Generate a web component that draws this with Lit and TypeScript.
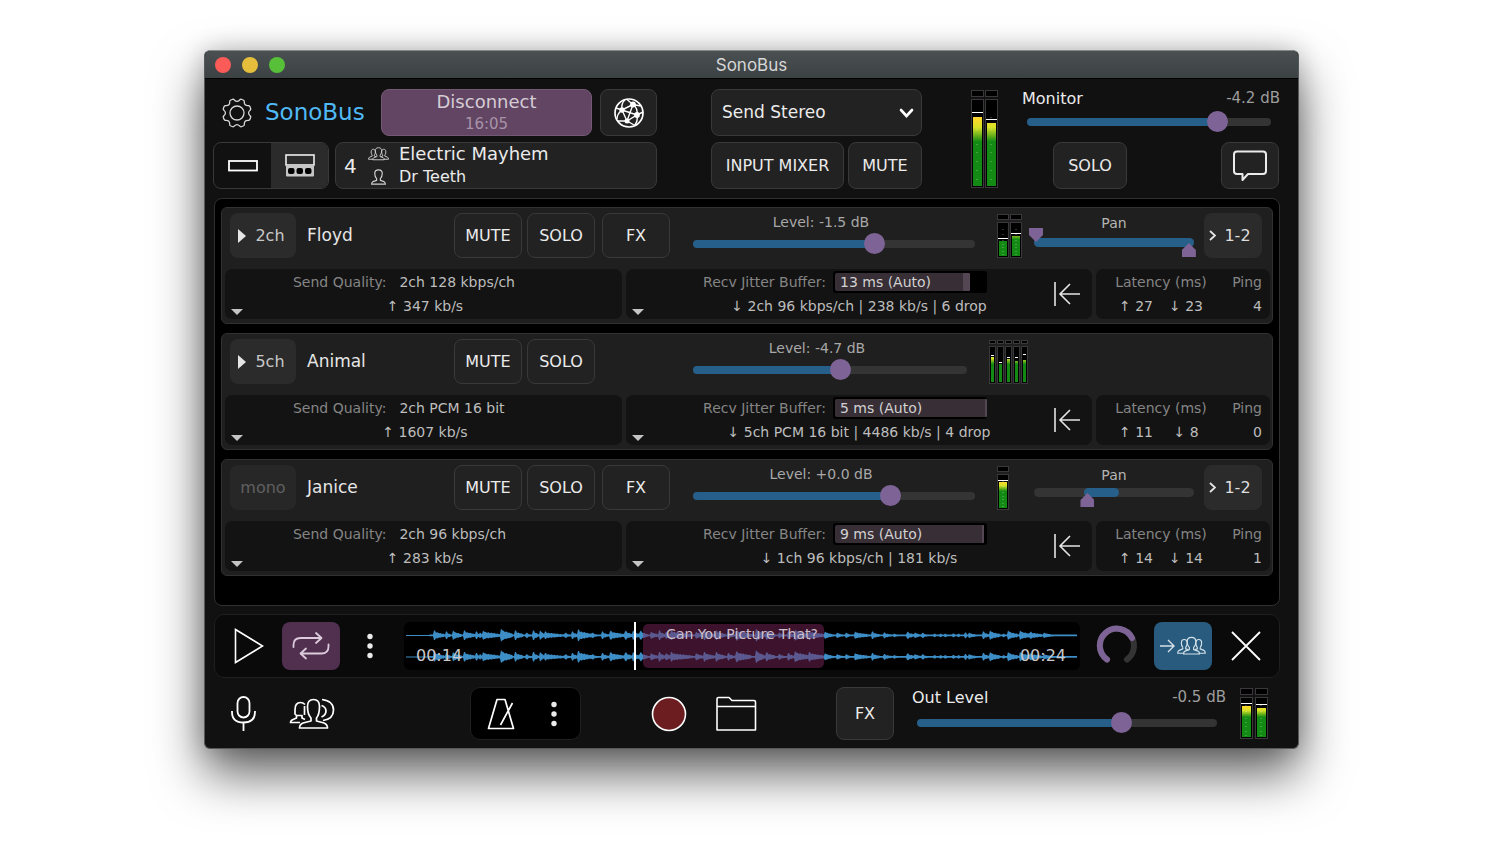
import { LitElement, html, css, svg, nothing } from "lit";
import { customElement, property } from "lit/decorators.js";

type Channel = { level: number; peak: number };

interface Peer {
  name: string;
  channels: string;
  expandable: boolean;
  fx: boolean;
  level: string;
  levelPos: number;
  meters: Channel[];
  thin?: boolean;
  pan?: number[];
  sendQuality: string;
  sendRate: string;
  buffer: string;
  bufferPos: number;
  recv: string;
  up: number;
  down: number;
  ping: number;
}

const PEERS: Peer[] = [
  {
    name: "Floyd", channels: "2ch", expandable: true, fx: true,
    level: "-1.5 dB", levelPos: 65.7,
    meters: [{ level: 0.46, peak: 0.55 }, { level: 0.6, peak: 0.69 }],
    pan: [0, 98],
    sendQuality: "2ch 128 kbps/ch", sendRate: "347 kb/s",
    buffer: "13 ms (Auto)", bufferPos: 88,
    recv: "2ch 96 kbps/ch | 238 kb/s | 6 drop", up: 27, down: 23, ping: 4,
  },
  {
    name: "Animal", channels: "5ch", expandable: true, fx: false,
    level: "-4.7 dB", levelPos: 54, thin: true,
    meters: [
      { level: 0.71, peak: 0.76 }, { level: 0.51, peak: 0.57 }, { level: 0.66, peak: 0.72 },
      { level: 0.59, peak: 0.72 }, { level: 0.64, peak: 0.79 },
    ],
    sendQuality: "2ch PCM 16 bit", sendRate: "1607 kb/s",
    buffer: "5 ms (Auto)", bufferPos: 100,
    recv: "5ch PCM 16 bit | 4486 kb/s | 4 drop", up: 11, down: 8, ping: 0,
  },
  {
    name: "Janice", channels: "mono", expandable: false, fx: true,
    level: "+0.0 dB", levelPos: 71.7,
    meters: [{ level: 0.8, peak: 0.86 }],
    pan: [33],
    sendQuality: "2ch 96 kbps/ch", sendRate: "283 kb/s",
    buffer: "9 ms (Auto)", bufferPos: 98,
    recv: "1ch 96 kbps/ch | 181 kb/s", up: 14, down: 14, ping: 1,
  },
];

/* Bursts of the loaded track: start, peak height, length. */
const BURSTS: number[][] = [
  [28, 5, 11], [40, 4, 5], [47, 5, 9], [58, 5, 12], [70, 4, 4], [74, 3, 3], [77, 5, 18], [95, 7, 12],
  [109, 5, 9], [120, 3, 6], [127, 5, 6], [134, 5, 5], [139, 4, 20], [159, 3, 6], [166, 4, 7], [172, 6, 14],
  [186, 3, 6], [196, 4, 7], [204, 5, 15], [219, 5, 8], [227, 5, 7], [234, 5, 8], [245, 4, 8], [253, 5, 7],
  [260, 4, 6], [265, 5, 22], [290, 4, 8], [298, 5, 11], [310, 5, 10], [322, 4, 7], [330, 6, 16], [350, 7, 9],
  [360, 5, 10], [373, 3, 7], [382, 4, 7], [389, 6, 15], [403, 5, 16], [419, 4, 9], [431, 3, 7], [440, 3, 5],
  [449, 4, 15], [466, 4, 8], [478, 3, 9], [488, 2, 5], [501, 4, 8], [509, 3, 7], [516, 3, 6], [528, 2, 2],
  [534, 2, 3], [539, 2, 4], [547, 2, 3], [552, 2, 3], [559, 3, 3], [563, 3, 9], [577, 4, 7], [584, 5, 11],
  [597, 2, 4], [602, 5, 11], [614, 5, 12], [624, 4, 14], [638, 3, 10],
];

function envelope(x: number): number {
  let amp = 0;
  for (const [start, peak, length] of BURSTS) {
    if (x >= start && x < start + length) {
      const t = (x - start) / length;
      const fade = x - start < 2 ? 1 : 0.78 - t * 0.5;
      const ripple = x % 3 === 0 ? 0.78 : 1;
      amp = Math.max(amp, peak * fade * ripple);
    }
  }
  return amp;
}

function wavePath(middle: number): string {
  const top: string[] = [];
  const bottom: string[] = [];
  for (let x = 0; x <= 671; x++) {
    const half = Math.max(x < 24 ? 0.6 : 0.9, envelope(x));
    top.push(`${x + 2} ${(middle - half).toFixed(1)}`);
    bottom.unshift(`${x + 2} ${(middle + half * 0.9).toFixed(1)}`);
  }
  return `M${top.join("L")}L${bottom.join("L")}Z`;
}

function gearPath(): string {
  const teeth = 8;
  let d = "";
  const at = (deg: number, r: number) => {
    const rad = (deg * Math.PI) / 180;
    return `${(15 + Math.cos(rad) * r).toFixed(2)} ${(15 + Math.sin(rad) * r).toFixed(2)}`;
  };
  for (let i = 0; i < teeth; i++) {
    const c = i * 45 + 22.5;
    d += `${i ? "L" : "M"}${at(c - 11, 13.2)}Q${at(c - 9, 14.4)} ${at(c - 5, 14.4)}L${at(c + 5, 14.4)}Q${at(c + 9, 14.4)} ${at(c + 11, 13.2)}Q${at(c + 22.5, 10.2)} ${at(c + 34, 13.2)}`;
  }
  return d + "Z";
}

const PERSON = "M9 15C7 13 6 10 6 7C6 3 8 1 12 1S18 3 18 7C18 10 17 13 15 15V18L21 20Q23 21 23 24H1Q1 21 3 20L9 18Z";
const SIDE = "M7 15C6 14 5 12 5 9C5 5 7 4 9 4S13 5 13 9C13 12 12 14 11 15V17L14 18M7 15V17L2 19Q0 20 0 23H9";

const crowd = (w: number, h: number, stroke: number) => html`
  <svg width=${w} height=${h} viewBox="-1 0 40 26" fill="none" stroke="currentColor" stroke-width=${stroke} stroke-linejoin="round" aria-hidden="true">
    <g transform="translate(7 0)"><path d=${PERSON} /></g>
    <path d=${SIDE} />
    <g transform="translate(38 0) scale(-1 1)"><path d=${SIDE} /></g>
  </svg>`;

const dots = html`
  <svg width="8" height="26" viewBox="0 0 8 26" fill="currentColor" aria-hidden="true">
    <circle cx="4" cy="3.5" r="2.7" /><circle cx="4" cy="13" r="2.7" /><circle cx="4" cy="22.5" r="2.7" />
  </svg>`;

const shared = css`
  *, *::before, *::after { box-sizing: border-box; }
  button, select, input { font: inherit; color: inherit; margin: 0; }
  button {
    display: flex; align-items: center; justify-content: center;
    padding: 0; background: none; border: 0; cursor: pointer;
  }
  svg { display: block; flex: none; }
  .key {
    background: #222; border: 1px solid #393939; border-radius: 8px;
    font-size: 16px; color: #ebebeb;
  }
`;

@customElement("level-meter")
export class LevelMeter extends LitElement {
  @property({ attribute: false }) channels: Channel[] = [];
  @property({ type: Number }) bar = 12;
  @property({ type: Number }) gap = 1;
  @property({ type: Number }) tall = 44;
  @property({ type: Number }) clip = 6;

  static styles = css`
    :host { display: block; flex: none; }
    svg { display: block; }
  `;

  render() {
    const { bar, gap, tall, clip } = this;
    const width = this.channels.length * (bar + gap) - gap;
    const top = clip + 2;
    const body = tall - top;
    const inset = 2;
    const marks = [0.2, 0.34, 0.5, 0.6, 0.7, 0.8, 0.9];
    return html`
      <svg width=${width} height=${tall} viewBox="0 0 ${width} ${tall}" role="img" aria-label="Level meter" shape-rendering="crispEdges">
        <defs>
          <linearGradient id="scale" gradientUnits="userSpaceOnUse" x1="0" x2="0" y1=${top} y2=${tall}>
            <stop offset="0.1" stop-color="#ff8c1a" />
            <stop offset="0.22" stop-color="#ffd92b" />
            <stop offset="0.32" stop-color="#d6e226" />
            <stop offset="0.48" stop-color="#128a14" />
            <stop offset="1" stop-color="#128a14" />
          </linearGradient>
        </defs>
        ${this.channels.map((c, i) => {
          const x = i * (bar + gap);
          const h = Math.round((body - 3) * c.level);
          const p = Math.round(tall - 2 - (body - 3) * c.peak);
          const wide = bar > 8;
          return svg`
            <rect x=${x + 0.5} y="0.5" width=${bar - 1} height=${clip - 1} fill="#000" stroke="#3b383b" />
            <rect x=${x + 0.5} y=${top + 0.5} width=${bar - 1} height=${body - 1} fill="#000" stroke="#3b383b" />
            <rect x=${x + inset} y=${tall - 2 - h} width=${bar - inset * 2} height=${h} fill="url(#scale)" />
            <rect x=${x + inset - (wide ? 1 : 0)} y=${p} width=${bar - inset * 2 + (wide ? 2 : 0)} height="1" fill="#fff" />
            ${wide ? marks.map((m) => svg`<rect x=${x + Math.floor(bar / 2) - 1} y=${Math.round(top + body * m)} width="2" height="1" fill="#fff" fill-opacity="0.2" />`) : nothing}
          `;
        })}
      </svg>`;
  }
}

@customElement("level-slider")
export class LevelSlider extends LitElement {
  @property() label = "";
  @property({ type: Number }) value = 0;
  @property() text = "";

  static styles = [shared, css`
    :host { display: block; min-width: 0; }
    .range {
      display: block; width: 100%; height: 21px; appearance: none; outline-offset: 2px;
      background: none; cursor: pointer;
    }
    .range::-webkit-slider-runnable-track {
      height: 8px; border-radius: 4px;
      background: linear-gradient(#265f89, #265f89) left / calc(11px + (100% - 21px) * var(--pos) / 100) 100% no-repeat #343434;
    }
    .range::-webkit-slider-thumb {
      appearance: none; width: 21px; height: 21px; margin-top: -7px;
      border-radius: 50%; background: #7e6496; border: 0;
    }
  `];

  render() {
    return html`<input class="range" type="range" min="0" max="100" step="0.1" .value=${String(this.value)}
      aria-label=${this.label} aria-valuetext=${this.text} style="--pos:${this.value}" />`;
  }
}

@customElement("peer-row")
export class PeerRow extends LitElement {
  @property({ attribute: false }) peer!: Peer;

  static styles = [shared, css`
    :host {
      display: block; background: #1f1f1f; border: 1px solid #313131; border-radius: 6px;
      padding: 5px 2px 4px 3px; font-size: 14px; color: #bdbdbd;
    }
    .top {
      display: grid; padding: 0 8px 0 5px; height: 45px; margin-bottom: 11px;
      grid-template-columns: 66px minmax(0, 158fr) 216px minmax(0, 364fr) minmax(0, 160fr) 68px;
    }
    .chan { background: #2b2b2b; border-radius: 8px; gap: 9px; padding-right: 3px; font-size: 16px; color: #c8c8c8; }
    .chan.plain { background: #272727; color: #606060; padding-right: 0; }
    .name { font-size: 17px; color: #e6e6e6; padding-left: 11px; line-height: 44px; }
    .keys { display: grid; grid-template-columns: 68px 68px 68px; column-gap: 5px; }
    .keys .fx { margin: 0 -2px 0 2px; }
    .level { display: flex; gap: 22px; padding-left: 23px; }
    .fader { flex: 1; min-width: 0; }
    .caption { display: block; text-align: center; line-height: 18px; padding-right: 26px; margin-bottom: 2px; color: #a8a8a8; }
    .slot { width: 37px; padding-top: 1px; }
    .slot.wide { width: 45px; }
    .pan { display: flex; flex-direction: column; }
    .pan-caption { text-align: center; line-height: 20px; color: #b4b4b4; margin-bottom: 5px; }
    .pan-track {
      height: 9px; border-radius: 5px; display: grid; align-items: center;
      background: #343434; position: relative;
    }
    .pan-fill { grid-area: 1 / 1; height: 9px; border-radius: 5px; background: #265f89; }
    .pan.single .pan-caption { margin-bottom: 3px; }
    .pan.single .pan-fill { width: 22%; margin-left: 31%; }
    .pan-input {
      position: absolute; left: -5px; width: calc(100% + 10px); height: 14px;
      appearance: none; background: none; pointer-events: none;
    }
    .pan-input.upper { top: -10px; }
    .pan-input.lower { top: 5px; }
    .pan-input::-webkit-slider-thumb {
      appearance: none; width: 14px; height: 14px; background: #7e6496; pointer-events: auto;
      clip-path: polygon(0 0, 100% 0, 100% 50%, 50% 100%, 0 50%);
    }
    .pan-input.lower::-webkit-slider-thumb { clip-path: polygon(0 100%, 100% 100%, 100% 50%, 50% 0, 0 50%); }
    .out { background: #2b2b2b; border-radius: 8px; font-size: 16px; color: #dedede; gap: 8px; margin-left: 10px; padding-right: 6px; }

    .stats {
      display: grid; column-gap: 4px;
      grid-template-columns: minmax(0, 397fr) minmax(0, 466fr) minmax(0, 174fr);
    }
    .panel {
      display: grid; grid-template-rows: 24px 24px; align-content: center; align-items: center;
      height: 50px; border-radius: 7px; background: #131313; text-align: left; white-space: nowrap;
      color: #bdbdbd;
    }
    .label { color: #858585; }
    .whole { grid-column: 1 / -1; grid-row: 2; text-align: center; }
    .arrow { grid-column: 1; grid-row: 2; padding: 12px 0 0 6px; justify-self: start; }
    .send { grid-template-columns: 161fr 222fr; column-gap: 13px; }
    .send .label, .recv .label { text-align: right; }
    .send .whole { padding-left: 3px; }
    .recv { grid-template-columns: 200fr 154fr 98fr; column-gap: 7px; }
    .buffer { display: grid; align-items: center; }
    .buffer-range {
      grid-area: 1 / 1; appearance: none; width: 100%; height: 22px; padding: 2px 0 2px 2px; background: #000; border-radius: 3px;
      cursor: pointer;
    }
    .buffer-range::-webkit-slider-runnable-track {
      height: 18px; border-radius: 2px;
      background: linear-gradient(#382e36, #382e36) left / calc(var(--pos) * 1%) 100% no-repeat;
    }
    .buffer-range::-webkit-slider-thumb { appearance: none; width: var(--grip); height: 18px; background: #544653; border-radius: 1px; }
    .buffer-text { grid-area: 1 / 1; padding-left: 7px; pointer-events: none; color: #d2d2d2; }
    .reset { grid-column: 3; grid-row: 1 / 3; justify-self: end; margin-right: 11px; color: #e4e4e4; }
    .times { grid-template-columns: 50px 50px minmax(0, 1fr); padding: 0 8px 0 15px; text-align: center; }
    .times .lat { grid-column: 1 / 3; }
    .times .end { text-align: right; }
  `];

  render() {
    const p = this.peer;
    const caret = html`<svg width="12" height="6" viewBox="0 0 12 6" fill="#c4c4c4" aria-hidden="true"><path d="M0 0H12L6 6Z" /></svg>`;
    return html`
      <div class="top">
        <button class="chan ${p.expandable ? "" : "plain"}">
          ${p.expandable ? html`<svg width="8" height="14" viewBox="0 0 8 14" fill="#e6e6e6" aria-hidden="true"><path d="M0 0L8 7L0 14Z" /></svg>` : nothing}
          ${p.channels}
        </button>
        <div class="name">${p.name}</div>
        <div class="keys">
          <button class="key">MUTE</button>
          <button class="key">SOLO</button>
          ${p.fx ? html`<button class="key fx">FX</button>` : nothing}
        </div>
        <div class="level">
          <div class="fader">
            <span class="caption">Level: ${p.level}</span>
            <level-slider label="${p.name} level" .value=${p.levelPos} text=${p.level}></level-slider>
          </div>
          <div class="slot ${p.thin ? "wide" : ""}">
            <level-meter .channels=${p.meters} .bar=${p.thin ? 7 : 12} .gap=${1} .clip=${p.thin ? 4 : 6}></level-meter>
          </div>
        </div>
        ${p.pan ? html`
          <div class="pan ${p.pan.length === 1 ? "single" : ""}">
            <span class="pan-caption">Pan</span>
            <div class="pan-track">
              <div class="pan-fill"></div>
              ${p.pan.map((v, i) => html`<input class="pan-input ${p.pan!.length > 1 && i === 0 ? "upper" : "lower"}" type="range" min="0" max="100" .value=${String(v)} aria-label="${p.name} pan ${i + 1}" />`)}
            </div>
          </div>
          <button class="out">
            <svg width="7" height="11" viewBox="0 0 7 11" fill="none" stroke="#e6e6e6" stroke-width="1.8" aria-hidden="true"><path d="M1 1L6 5.5L1 10" /></svg>1-2
          </button>` : nothing}
      </div>
      <div class="stats">
        <button class="panel send">
          <span class="label">Send Quality:</span><span>${p.sendQuality}</span>
          <span class="whole">↑ ${p.sendRate}</span>
          <span class="arrow">${caret}</span>
        </button>
        <div class="panel recv">
          <label class="label" for="buffer">Recv Jitter Buffer:</label>
          <div class="buffer">
            <input id="buffer" class="buffer-range" type="range" min="0" max="100" .value=${String(p.bufferPos)}
              style="--pos:${p.bufferPos};--grip:${p.bufferPos < 95 ? 7 : 2}px" aria-valuetext=${p.buffer} />
            <span class="buffer-text">${p.buffer}</span>
          </div>
          <span class="whole">↓ ${p.recv}</span>
          <button class="arrow" aria-label="Receive options">${caret}</button>
          <button class="reset" aria-label="Reset jitter buffer">
            <svg width="28" height="26" viewBox="0 0 28 26" fill="none" stroke="currentColor" stroke-width="1.6" aria-hidden="true">
              <path d="M2 1V25M7 13H27M17 3L7 13L17 23" />
            </svg>
          </button>
        </div>
        <div class="panel times">
          <span class="label lat">Latency (ms)</span><span class="label end">Ping</span>
          <span>↑ ${p.up}</span><span>↓ ${p.down}</span><span class="end">${p.ping}</span>
        </div>
      </div>`;
  }
}

@customElement("app-root")
export class AppRoot extends LitElement {
  static styles = [shared, css`
    :host {
      display: flex; box-sizing: border-box; min-height: 100vh; padding: 50px 205px 97px 204px;
      background: #fff; color: #ebebeb; font-family: "DejaVu Sans", Verdana, sans-serif; font-size: 16px;
    }
    .window {
      flex: 1; min-width: 0; display: flex; flex-direction: column; background: #111;
      border: 1px solid #56595b; border-top-color: #85888a; border-radius: 6px; overflow: hidden;
      box-shadow: 0 25px 50px rgba(0, 0, 0, 0.62), 0 0 24px rgba(0, 0, 0, 0.2);
    }
    .titlebar {
      display: grid; grid-template-columns: 1fr auto 1fr; align-items: center; height: 28px; padding: 0 10px;
      background: linear-gradient(#4a4f51, #3c4143); border-bottom: 1px solid #000;
    }
    .lights { display: flex; gap: 11px; }
    .light { width: 16px; height: 16px; border-radius: 50%; background: #fc5b57; }
    .light.min { background: #e5bf3c; }
    .light.max { background: #57c038; }
    .title { font: 400 17px/28px "Inter", "Liberation Sans", sans-serif; color: #d6d7d8; margin: 0; }
    .content { flex: 1; display: flex; flex-direction: column; padding: 10px 18px 8px 8px; }

    .header {
      display: grid; column-gap: 24px; margin-bottom: 9px;
      grid-template-columns: minmax(0, 444fr) minmax(0, 266fr) 27px minmax(0, 258fr);
    }
    .session, .input { display: grid; grid-template-rows: 47px 47px; row-gap: 6px; }
    .input { margin-left: 30px; margin-right: 25px; }
    .session-top { display: grid; grid-template-columns: 168px minmax(0, 1fr) 57px; }
    .brand { display: flex; align-items: center; gap: 13px; padding-left: 9px; color: #d8d8d8; }
    .brand-name { font-size: 23px; line-height: 28px; padding-bottom: 2px; color: #50b9f6; }
    .disconnect {
      flex-direction: column; background: #624463; border: 1px solid #745974; border-radius: 8px;
      font-size: 18px; line-height: 24px; color: #d5cdd5; margin-right: 8px;
    }
    .elapsed { font-size: 15px; line-height: 21px; color: #a793a8; }
    .session-bottom { display: grid; grid-template-columns: 116px minmax(0, 1fr); column-gap: 6px; }
    .views { display: grid; grid-template-columns: 1fr 1fr; border: 1px solid #393939; border-radius: 8px; overflow: hidden; }
    .view.on { background: #2b2b2b; }
    .group {
      display: grid; grid-template-columns: 13px 20px minmax(0, 1fr); grid-template-rows: 22px 23px;
      column-gap: 11px; align-content: center; align-items: center; justify-items: start; padding-left: 8px;
      background: #222; border: 1px solid #393939; border-radius: 8px; white-space: nowrap;
    }
    .count { grid-row: 1 / 3; font-size: 20px; }
    .group .ico { justify-self: center; color: #cfcfcf; }
    .group-name { font-size: 18px; line-height: 22px; }
    .user { line-height: 23px; }
    .picker { display: grid; align-items: center; }
    .mode { grid-area: 1 / 1; appearance: none; width: 100%; height: 47px; padding: 0 32px 2px 10px; font-size: 17px; }
    .chevron { grid-area: 1 / 1; justify-self: end; margin-right: 8px; pointer-events: none; }
    .input-keys { display: grid; grid-template-columns: 133fr 74fr; column-gap: 4px; white-space: nowrap; }
    .meter-box { padding-top: 1px; }
    .row { display: flex; justify-content: space-between; line-height: 20px; white-space: nowrap; }
    .value { font-size: 15px; line-height: 18px; color: #9d9d9d; }
    .monitor-slider { margin: 2px 9px 10px 5px; }
    .monitor-keys { display: flex; justify-content: space-between; height: 47px; padding: 0 1px 0 31px; }
    .solo { width: 74px; }
    .chat { width: 58px; }

    .peers {
      flex: 1; display: flex; flex-direction: column; gap: 9px; margin-left: 1px; padding: 8px 6px;
      background: #000; border: 1px solid #303030; border-radius: 8px;
    }
    .player {
      display: grid; grid-template-columns: 67px 58px 60px minmax(0, 1fr) 74px 58px 67px; align-items: center;
      height: 64px; margin: 8px 0 9px 1px; background: #0a0a0a; border: 1px solid #1f1f1f; border-radius: 10px;
    }
    .square { height: 48px; border-radius: 8px; }
    .loop { background: #51304f; color: #dccbdc; }
    .toall { background: #285b7e; color: #d5e2ea; gap: 2px; }
    .wave {
      display: grid; height: 48px; margin-left: 4px; background: #000; border-radius: 6px; overflow: hidden;
    }
    .wave > * { grid-area: 1 / 1; }
    .wave-art { width: 100%; height: 48px; }
    .track-name { justify-self: center; font-size: 14px; line-height: 25px; color: #cbbfca; }
    .time { align-self: end; line-height: 28px; padding: 0 12px; color: #c9c9c9; }
    .time.end { justify-self: end; padding-right: 14px; }
    .knob { display: grid; place-items: center; }
    .knob > * { grid-area: 1 / 1; }
    .knob-input { width: 40px; height: 40px; opacity: 0; cursor: pointer; }

    .footer {
      display: grid; height: 53px; padding-right: 12px;
      grid-template-columns: minmax(0, 257fr) 111px minmax(0, 255fr) 58px minmax(0, 346fr) 28px;
    }
    .tools { display: flex; align-items: center; padding-left: 14px; gap: 30px; }
    .metro { display: grid; grid-template-columns: 60px 46px; background: #000; border: 1px solid #1f1f1f; border-radius: 10px; }
    .capture { display: flex; align-items: center; padding-left: 70px; gap: 28px; }
    .out-level { padding: 1px 14px 0 18px; }
    .out-slider { margin: 4px 9px 0 5px; }
  `];

  render() {
    return html`
      <main class="window">
        <header class="titlebar">
          <div class="lights">
            <button class="light" aria-label="Close"></button>
            <button class="light min" aria-label="Minimise"></button>
            <button class="light max" aria-label="Zoom"></button>
          </div>
          <h1 class="title">SonoBus</h1>
        </header>
        <div class="content">
          <section class="header">${this.renderSession()}${this.renderInput()}
            <div class="meter-box">
              <level-meter .channels=${[{ level: 0.8, peak: 0.86 }, { level: 0.73, peak: 0.78 }]} .bar=${13} .gap=${1} .tall=${98} .clip=${7}></level-meter>
            </div>
            <div>
              <div class="row"><span>Monitor</span><span class="value">-4.2 dB</span></div>
              <level-slider class="monitor-slider" label="Monitor" .value=${80.5} text="-4.2 dB"></level-slider>
              <div class="monitor-keys">
                <button class="key solo">SOLO</button>
                <button class="key chat" aria-label="Chat">
                  <svg width="36" height="32" viewBox="0 0 36 32" fill="none" stroke="#ebebeb" stroke-width="2" stroke-linejoin="round" aria-hidden="true">
                    <path d="M5 1.500H31Q34 1.500 34 4.500V21Q34 24 31 24H16L10.500 30V24H5Q2 24 2 21V4.500Q2 1.500 5 1.500Z" />
                  </svg>
                </button>
              </div>
            </div>
          </section>
          <section class="peers">${PEERS.map((p) => html`<peer-row .peer=${p}></peer-row>`)}</section>
          ${this.renderPlayer()}${this.renderFooter()}
        </div>
      </main>`;
  }

  private renderSession() {
    return html`
      <div class="session">
        <div class="session-top">
          <div class="brand">
            <button aria-label="Settings">
              <svg width="30" height="30" viewBox="0 0 30 30" fill="none" stroke="currentColor" stroke-width="1.3" stroke-linejoin="round" aria-hidden="true">
                <path d=${gearPath()} /><circle cx="15" cy="15" r="7" />
              </svg>
            </button>
            <span class="brand-name">SonoBus</span>
          </div>
          <button class="disconnect">Disconnect<span class="elapsed">16:05</span></button>
          <button class="key" aria-label="Public groups">
            <svg width="32" height="32" viewBox="0 0 32 32" fill="none" stroke="#fff" stroke-width="1.4" aria-hidden="true">
              <circle cx="16" cy="16" r="14" stroke-width="1.700" />
              <path d="M3 11L9 13L20 7.500L14 2.500M9 13Q4 17 4 22M9 13Q8 6 12 3M9 13L24 18M20 7.500L28 9M24 18L30 15M20 7.500L14 24L9 13M14 24L5 24M14 24L24 18Q25 24 22 28M14 24L22 28.500M20 7.500Q25 11 24 18" />
              <g fill="#fff" stroke="none"><circle cx="9" cy="13" r="2.700" /><circle cx="20" cy="7.500" r="2.900" /><circle cx="24" cy="18" r="2.900" /><circle cx="14" cy="24" r="2.500" /></g>
            </svg>
          </button>
        </div>
        <div class="session-bottom">
          <div class="views">
            <button class="view" aria-label="Compact view">
              <svg width="30" height="12" viewBox="0 0 30 12" fill="none" stroke="#fff" stroke-width="1.800" aria-hidden="true"><rect x="1" y="1" width="28" height="9.500" /></svg>
            </button>
            <button class="view on" aria-label="Full view">
              <svg width="30" height="23" viewBox="0 0 30 23" aria-hidden="true">
                <rect x="1" y="1" width="28" height="10" fill="none" stroke="#eee" stroke-width="1.600" />
                <rect x="1" y="11" width="28" height="11.500" rx="1" fill="#c6c6c6" />
                <rect x="3" y="14" width="6.500" height="6" rx="2" fill="#000" /><rect x="11.500" y="14" width="6.500" height="6" rx="2" fill="#000" /><rect x="20" y="14" width="6.500" height="6" rx="2" fill="#000" />
              </svg>
            </button>
          </div>
          <button class="group">
            <span class="count">4</span>
            <span class="ico">${crowd(21, 14, 1.8)}</span><span class="group-name">Electric Mayhem</span>
            <span class="ico">
              <svg width="15" height="16" viewBox="0 0 24 25" fill="none" stroke="currentColor" stroke-width="1.900" stroke-linejoin="round" aria-hidden="true"><path d=${PERSON} /></svg>
            </span><span class="user">Dr Teeth</span>
          </button>
        </div>
      </div>`;
  }

  private renderInput() {
    return html`
      <div class="input">
        <div class="picker">
          <select class="key mode" aria-label="Send channels"><option>Send Stereo</option><option>Send Mono</option></select>
          <svg class="chevron" width="15" height="11" viewBox="0 0 15 11" fill="none" stroke="#fff" stroke-width="2.600" stroke-linecap="round" aria-hidden="true"><path d="M2 3L7.500 9L13 3" /></svg>
        </div>
        <div class="input-keys"><button class="key">INPUT MIXER</button><button class="key">MUTE</button></div>
      </div>`;
  }

  private renderPlayer() {
    return html`
      <section class="player">
        <button class="square" aria-label="Play">
          <svg width="30" height="36" viewBox="0 0 30 36" fill="none" stroke="#fff" stroke-width="1.600" aria-hidden="true"><path d="M1.500 1.500V34.500L28.500 18Z" /></svg>
        </button>
        <button class="square loop" aria-label="Loop">
          <svg width="58" height="48" viewBox="0 0 58 48" fill="none" stroke="currentColor" stroke-width="1.800" stroke-linecap="round" stroke-linejoin="round" aria-hidden="true">
            <path d="M11.500 25V23Q11.500 16 18.500 16H39M34 11L39.500 16L34 21M46.500 22.500V24.500Q46.500 31.500 39.500 31.500H19M24 26.500L18.500 31.500L24 36.500" />
          </svg>
        </button>
        <button class="square" aria-label="Player menu">${dots}</button>
        <div class="wave">
          <svg class="wave-art" viewBox="0 0 676 48" preserveAspectRatio="none" role="img" aria-label="Waveform">
            <path d=${wavePath(13.5)} fill="#3d8dc6" />
            <path d=${wavePath(35)} fill="#3d8dc6" />
            <rect x="239" y="2" width="181" height="44" rx="5" fill="#7a2457" fill-opacity="0.500" />
            <rect x="230" y="0" width="2" height="48" fill="#fff" />
          </svg>
          <span class="track-name">Can You Picture That?</span>
          <span class="time">00:14</span>
          <span class="time end">00:24</span>
        </div>
        <div class="knob">
          <svg width="42" height="42" viewBox="0 0 42 42" fill="none" stroke-width="6" stroke-linecap="round" aria-hidden="true">
            <path d="M11 34.500A17 17 0 1 1 31 34.500" stroke="#343434" />
            <path d="M11 34.500A17 17 0 1 1 36 13" stroke="#7e6496" />
          </svg>
          <input class="knob-input" type="range" min="0" max="100" value="72" aria-label="Playback level" />
        </div>
        <button class="square toall" aria-label="Send playback to everyone">
          <svg width="15" height="14" viewBox="0 0 15 14" fill="none" stroke="currentColor" stroke-width="1.400" aria-hidden="true"><path d="M0 7H14M8 1L14 7L8 13" /></svg>
          ${crowd(29, 20, 1.6)}
        </button>
        <button class="square" aria-label="Close player">
          <svg width="30" height="30" viewBox="0 0 30 30" fill="none" stroke="#fff" stroke-width="1.800" aria-hidden="true"><path d="M1 1L29 29M29 1L1 29" /></svg>
        </button>
      </section>`;
  }

  private renderFooter() {
    return html`
      <section class="footer">
        <div class="tools">
          <button aria-label="Mute microphone">
            <svg width="32" height="36" viewBox="0 0 32 36" fill="none" stroke="#fff" stroke-width="1.800" aria-hidden="true">
              <rect x="10.500" y="1" width="12" height="20.500" rx="6" /><path d="M5 15V16Q5 26.500 16.500 26.500T28 16V15M16.500 26.500V35" />
            </svg>
          </button>
          <button aria-label="Mute everyone">
            <svg width="48" height="34" viewBox="0 0 48 34" fill="none" stroke="#fff" stroke-width="1.700" stroke-linejoin="round" aria-hidden="true">
              <path d="M22 21C19 18 18.500 14 18.500 9.500C18.500 5 20.500 2.500 24.500 2.500S30.500 5 30.500 9.500C30.500 14 30 18 27.500 21V24L35 26Q38.500 27.500 38.500 31H10.500Q10.500 27.500 14 26L22 24Z" />
              <path d="M16 7.500Q14 5.500 11.500 5.500Q6 5.500 6 13V17L7.500 18.500V21L3 23Q1.500 24 1.500 25.500H11M7.500 18.500H13V21L16 22.500M15.500 9V18" />
              <path d="M32.500 8.500Q37 10 37 14T32.500 20M33 2.500Q44.500 4 44.500 13T34 23.500" />
            </svg>
          </button>
        </div>
        <div class="metro">
          <button aria-label="Metronome">
            <svg width="28" height="32" viewBox="0 0 28 32" fill="none" stroke="#fff" stroke-width="1.700" stroke-linejoin="round" aria-hidden="true">
              <path d="M10 1.500H18L26.500 30.500H1.500ZM25.500 5L13.500 27" />
            </svg>
          </button>
          <button aria-label="Metronome options">${dots}</button>
        </div>
        <div class="capture">
          <button aria-label="Record">
            <svg width="36" height="36" viewBox="0 0 36 36" aria-hidden="true"><circle cx="18" cy="18" r="16.500" fill="#6b1d20" stroke="#fff" stroke-width="1.600" /></svg>
          </button>
          <button aria-label="Open recordings">
            <svg width="42" height="36" viewBox="0 0 42 36" fill="none" stroke="#fff" stroke-width="1.600" stroke-linejoin="round" aria-hidden="true">
              <path d="M2 34V3Q2 1.500 3.500 1.500H14L17 4.500H39Q40.500 4.500 40.500 6V34ZM2 10.500H40.500" />
            </svg>
          </button>
        </div>
        <button class="key">FX</button>
        <div class="out-level">
          <div class="row"><span>Out Level</span><span class="value">-0.5 dB</span></div>
          <level-slider class="out-slider" label="Out level" .value=${69.5} text="-0.5 dB"></level-slider>
        </div>
        <div class="meter-box">
          <level-meter .channels=${[{ level: 0.79, peak: 0.88 }, { level: 0.74, peak: 0.84 }]} .bar=${13} .gap=${2} .tall=${51} .clip=${7}></level-meter>
        </div>
      </section>`;
  }
}
